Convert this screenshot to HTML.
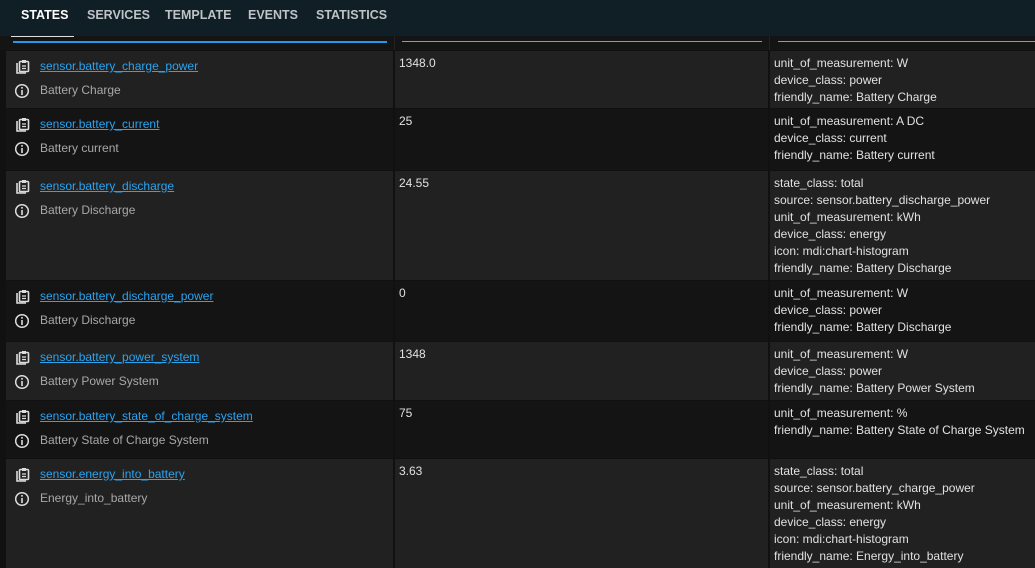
<!DOCTYPE html>
<html><head><style>
*{margin:0;padding:0;box-sizing:border-box}
body{width:1035px;height:568px;overflow:hidden;background:#111;font-family:"Liberation Sans",sans-serif;font-size:12px;color:#e1e1e1;position:relative}
.hdr{position:absolute;left:0;top:0;width:1035px;height:36px;background:#101e25}
.tab{position:absolute;top:8px;font-size:12.5px;font-weight:bold;color:#bdc3c6}
.tab.a{color:#fff}
.row{position:absolute;left:0;width:1035px}
.c{position:absolute;top:0;bottom:0;white-space:nowrap}
.c1{left:6px;width:387px}
.c2{left:395px;width:373px}
.c3{left:770px;width:265px}
.odd .c{background:#212121}
.even .c{background:#141414}
.lnk{position:absolute;left:34px;top:8px;color:#2aa3f0;text-decoration:underline}
.nm{position:absolute;left:34px;top:32px;color:#a8a8a8}
.ic1{position:absolute;left:8px;top:8px}
.ic2{position:absolute;left:8px;top:32px}
.val{position:absolute;left:4px;top:5px}
.attr{position:absolute;left:4px;top:4px;line-height:17px}
</style></head><body>
<div class="hdr">
<span class="tab a" style="left:21px">STATES</span>
<span class="tab" style="left:87px">SERVICES</span>
<span class="tab" style="left:165px">TEMPLATE</span>
<span class="tab" style="left:248px">EVENTS</span>
<span class="tab" style="left:316px">STATISTICS</span>
</div>
<div style="position:absolute;top:36px;left:0;width:1035px;height:14px;background:#141414"></div>
<div style="position:absolute;top:36px;left:11px;width:63px;height:1px;background:#ddd"></div>
<div style="position:absolute;top:41px;left:13px;width:374px;height:2px;background:#1e9be9"></div>
<div style="position:absolute;top:41px;left:402px;width:360px;height:1px;background:#999"></div>
<div style="position:absolute;top:41px;left:778px;width:257px;height:1px;background:#999"></div>
<div style="position:absolute;top:36px;left:394px;width:1px;height:14px;background:#222"></div>
<div style="position:absolute;top:36px;left:769px;width:1px;height:14px;background:#222"></div>

<svg width="0" height="0" style="position:absolute"><defs>
<g id="clip"><path d="M3 4v10h9" fill="none" stroke="#ddd" stroke-width="1.6"/><rect x="5.5" y="2.5" width="9" height="10" rx="1" fill="none" stroke="#ddd" stroke-width="1.6"/><rect x="8" y="1" width="4" height="3" fill="#ddd"/><path d="M8 7h4M8 9.5h4" stroke="#ddd" stroke-width="1.3"/></g>
<g id="info"><circle cx="8" cy="8" r="6.3" fill="none" stroke="#ddd" stroke-width="1.5"/><rect x="7.2" y="7" width="1.6" height="5" fill="#ddd"/><rect x="7.2" y="4" width="1.6" height="1.7" fill="#ddd"/></g>
</defs></svg>

<div class="row odd" style="top:51px;height:57px"><div class="c c1"><svg class="ic1" width="16" height="16"><use href="#clip"/></svg><a class="lnk">sensor.battery_charge_power</a><svg class="ic2" width="16" height="16"><use href="#info"/></svg><span class="nm">Battery Charge</span></div><div class="c c2"><span class="val">1348.0</span></div><div class="c c3"><div class="attr">unit_of_measurement: W<br>device_class: power<br>friendly_name: Battery Charge</div></div></div>

<div class="row even" style="top:109px;height:61px"><div class="c c1"><svg class="ic1" width="16" height="16"><use href="#clip"/></svg><a class="lnk">sensor.battery_current</a><svg class="ic2" width="16" height="16"><use href="#info"/></svg><span class="nm">Battery current</span></div><div class="c c2"><span class="val">25</span></div><div class="c c3"><div class="attr">unit_of_measurement: A DC<br>device_class: current<br>friendly_name: Battery current</div></div></div>

<div class="row odd" style="top:171px;height:109px"><div class="c c1"><svg class="ic1" width="16" height="16"><use href="#clip"/></svg><a class="lnk">sensor.battery_discharge</a><svg class="ic2" width="16" height="16"><use href="#info"/></svg><span class="nm">Battery Discharge</span></div><div class="c c2"><span class="val">24.55</span></div><div class="c c3"><div class="attr">state_class: total<br>source: sensor.battery_discharge_power<br>unit_of_measurement: kWh<br>device_class: energy<br>icon: mdi:chart-histogram<br>friendly_name: Battery Discharge</div></div></div>

<div class="row even" style="top:281px;height:60px"><div class="c c1"><svg class="ic1" width="16" height="16"><use href="#clip"/></svg><a class="lnk">sensor.battery_discharge_power</a><svg class="ic2" width="16" height="16"><use href="#info"/></svg><span class="nm">Battery Discharge</span></div><div class="c c2"><span class="val">0</span></div><div class="c c3"><div class="attr">unit_of_measurement: W<br>device_class: power<br>friendly_name: Battery Discharge</div></div></div>

<div class="row odd" style="top:342px;height:58px"><div class="c c1"><svg class="ic1" width="16" height="16"><use href="#clip"/></svg><a class="lnk">sensor.battery_power_system</a><svg class="ic2" width="16" height="16"><use href="#info"/></svg><span class="nm">Battery Power System</span></div><div class="c c2"><span class="val">1348</span></div><div class="c c3"><div class="attr">unit_of_measurement: W<br>device_class: power<br>friendly_name: Battery Power System</div></div></div>

<div class="row even" style="top:401px;height:57px"><div class="c c1"><svg class="ic1" width="16" height="16"><use href="#clip"/></svg><a class="lnk">sensor.battery_state_of_charge_system</a><svg class="ic2" width="16" height="16"><use href="#info"/></svg><span class="nm">Battery State of Charge System</span></div><div class="c c2"><span class="val">75</span></div><div class="c c3"><div class="attr">unit_of_measurement: %<br>friendly_name: Battery State of Charge System</div></div></div>

<div class="row odd" style="top:459px;height:109px"><div class="c c1"><svg class="ic1" width="16" height="16"><use href="#clip"/></svg><a class="lnk">sensor.energy_into_battery</a><svg class="ic2" width="16" height="16"><use href="#info"/></svg><span class="nm">Energy_into_battery</span></div><div class="c c2"><span class="val">3.63</span></div><div class="c c3"><div class="attr">state_class: total<br>source: sensor.battery_charge_power<br>unit_of_measurement: kWh<br>device_class: energy<br>icon: mdi:chart-histogram<br>friendly_name: Energy_into_battery</div></div></div>
</body></html>
